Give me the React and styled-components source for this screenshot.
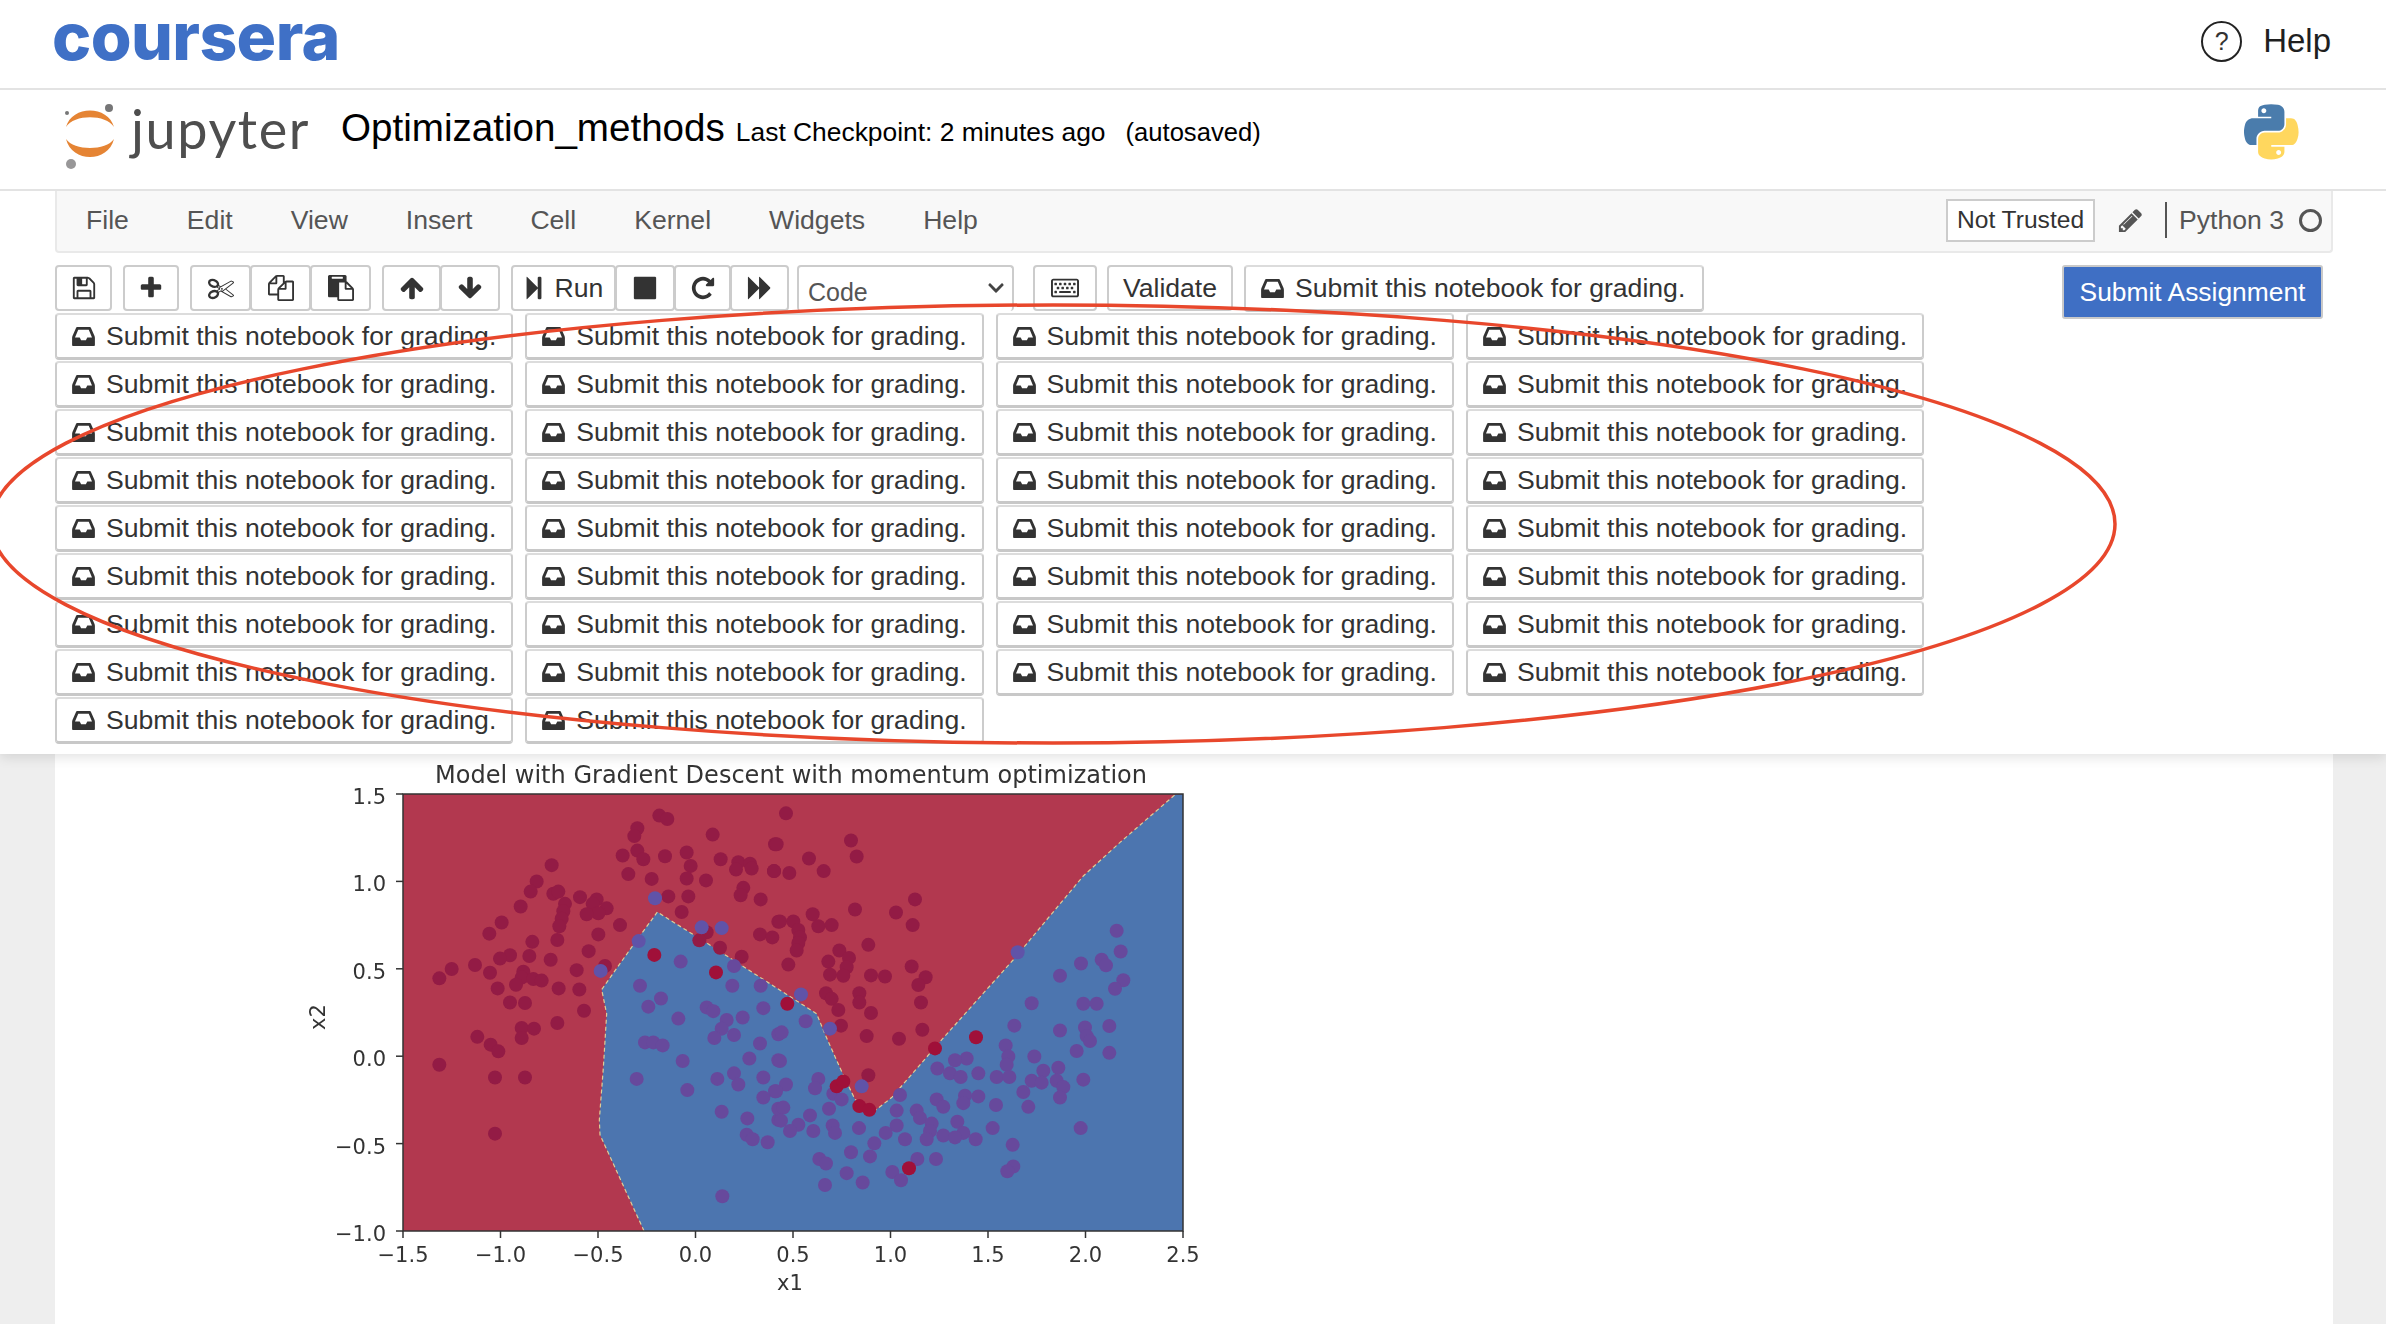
import React from 'react';
import styled, { createGlobalStyle } from 'styled-components';
import { FaRegKeyboard, FaChevronDown } from 'react-icons/fa';

const GlobalStyle = createGlobalStyle`
  html, body {
    margin: 0;
    padding: 0;
    background: #eeeeee;
    font-family: "Liberation Sans", Arial, sans-serif;
    overflow: hidden;
  }
`;

const Page = styled.div`
  position: relative;
  width: 2386px;
  height: 1324px;
  overflow: hidden;
`;

// everything fixed on top of the notebook
const TopArea = styled.div`
  position: relative;
  z-index: 2;
  height: 754px;
  background: #fff;
  box-shadow: 0 3px 12px rgba(0, 0, 0, 0.12);
`;

const CourseraBar = styled.div`
  height: 88px;
  box-sizing: content-box;
  padding: 0 55px 0 52px;
  display: flex;
  align-items: center;
  justify-content: space-between;
  border-bottom: 2px solid #e3e3e3;
`;

const Logo = styled.div`
  font-family: Inter, sans-serif;
  font-weight: 800;
  font-size: 66px;
  line-height: 70px;
  letter-spacing: -0.6px;
  color: #3f70c6;
  padding-bottom: 16px;
`;

const HelpLink = styled.div`
  display: flex;
  align-items: center;
  gap: 21px;
  font-size: 33px;
  color: #1f1f1f;
  padding-bottom: 6px;
`;

const HelpCircle = styled.div`
  width: 37px;
  height: 37px;
  border: 2px solid #222;
  border-radius: 50%;
  display: flex;
  align-items: center;
  justify-content: center;
  font-size: 25px;
  color: #333;
`;

const NotebookHeader = styled.div`
  height: 99px;
  padding-left: 60px;
  padding-right: 87px;
  display: flex;
  align-items: center;
  border-bottom: 2px solid #e3e3e3;
`;

const JupyterMark = styled.svg`
  width: 60px;
  height: 70px;
  flex: none;
  margin-top: -8px;
`;

const JupyterWord = styled.div`
  font-family: Lato, sans-serif;
  font-size: 54px;
  letter-spacing: 1.6px;
  color: #4e4e4e;
  margin-left: 11px;
  margin-top: -23px;
  width: 210px;
`;

const TitleGroup = styled.div`
  display: flex;
  align-items: baseline;
  color: #000;
  margin-top: -24px;
`;

const Title = styled.span`
  font-size: 38.6px;
  margin-right: 11px;
`;

const Checkpoint = styled.span`
  font-size: 26.4px;
  margin-right: 20px;
`;

const Autosaved = styled.span`
  font-size: 25.6px;
`;

const PythonLogo = styled.svg`
  width: 55px;
  height: 56px;
  margin-left: auto;
  margin-top: -15px;
  flex: none;
`;

const MenuBar = styled.div`
  margin: 0 53px 0 55px;
  height: 62px;
  box-sizing: border-box;
  padding: 0 9px 2px 0;
  display: flex;
  align-items: center;
  background: #f8f8f8;
  border: 2px solid #e9e9e9;
  border-top: none;
  border-radius: 0 0 4px 4px;
  font-size: 26.6px;
  color: #555;
`;

const MenuItem = styled.span`
  padding: 0 29px;
`;

const MenuRight = styled.div`
  margin-left: auto;
  display: flex;
  align-items: center;
`;

const TrustBadge = styled.div`
  width: 149px;
  height: 43px;
  box-sizing: border-box;
  display: flex;
  align-items: center;
  justify-content: center;
  background: #fff;
  border: 2px solid #ccc;
  color: #333;
  font-size: 24.6px;
`;

const KernelName = styled.span`
  margin-left: 21px;
  padding-left: 12px;
  border-left: 2px solid #555;
  height: 36px;
  line-height: 36px;
  font-size: 26.6px;
  color: #555;
`;

const KernelDot = styled.div`
  width: 23px;
  height: 23px;
  box-sizing: border-box;
  border: 3.5px solid #555;
  border-radius: 50%;
  margin-left: 15px;
`;

const Toolbar = styled.div`
  margin: 12px 63px 2px 55px;
  height: 46px;
  display: flex;
  gap: 11px;
`;

const BtnGroup = styled.div`
  display: flex;
`;

const Btn = styled.div`
  width: ${(p) => p.$w || 60}px;
  height: 46px;
  flex: none;
  box-sizing: border-box;
  display: flex;
  align-items: center;
  justify-content: center;
  gap: 8px;
  background: #fff;
  border: 2px solid #ccc;
  margin-left: -1px;
  border-radius: 4px;
  color: #333;
  font-size: 26.6px;
  &:first-child {
    margin-left: 0;
  }
`;

const RunBtn = styled(Btn)`
  padding-right: 3px;
`;

const KeyboardBtn = styled(Btn)`
  margin-left: 8px;
`;

const CellType = styled.div`
  width: 217px;
  height: 46px;
  flex: none;
  box-sizing: border-box;
  margin-left: -3px;
  padding: 6px 7px 0 9px;
  display: flex;
  align-items: center;
  justify-content: space-between;
  background: #fff;
  border: 2px solid #ccc;
  border-bottom-width: 0;
  border-radius: 4px;
  color: #555;
  font-size: 25px;
`;

const SubmitAssignment = styled.div`
  margin-left: auto;
  width: 261px;
  height: 54px;
  box-sizing: border-box;
  display: flex;
  align-items: center;
  justify-content: center;
  flex: none;
  background: #3f6fc4;
  border: 2px solid #c9c9c9;
  border-radius: 3px;
  color: #fff;
  font-size: 26.4px;
`;

const SubmitGrid = styled.div`
  margin-left: 55px;
  display: grid;
  grid-template-columns: repeat(4, 458.3px);
  grid-auto-rows: 47px;
  column-gap: 12px;
  row-gap: 1px;
`;

const SubmitBtn = styled(Btn)`
  width: ${(p) => p.$w || 458.3}px;
  height: 47px;
  justify-content: flex-start;
  padding-left: 15px;
  margin-left: 0;
  gap: 11px;
  border-top-color: #dcdcdc;
  border-bottom: 3px solid #c8c8c8;
`;

const Notebook = styled.div`
  margin: 0 53px 0 55px;
  height: 570px;
  background: #fff;
`;

const Chart = styled.svg`
  display: block;
  margin-left: 245px;
  width: 920px;
  height: 570px;
  filter: blur(0.5px);
  font-family: "DejaVu Sans", sans-serif;
`;

// the hand drawn red circle around the repeated buttons
const Scribble = styled.svg`
  position: absolute;
  left: 0;
  top: 0;
  z-index: 3;
  width: 2386px;
  height: 1324px;
  pointer-events: none;
`;

// toolbar glyphs, notebook uses font awesome 4
const glyphs = {
  save: 'M512 1536h768v-384h-768v384zm896 0h128v-896q0-14-10-38.5t-20-34.5l-281-281q-10-10-34-20t-39-10v416q0 40-28 68t-68 28h-576q-40 0-68-28t-28-68v-416h-128v1280h128v-416q0-40 28-68t68-28h832q40 0 68 28t28 68v416zm-384-928v-320q0-13-9.5-22.5t-22.5-9.5h-192q-13 0-22.5 9.5t-9.5 22.5v320q0 13 9.5 22.5t22.5 9.5h192q13 0 22.5-9.5t9.5-22.5zm640 32v928q0 40-28 68t-68 28h-1344q-40 0-68-28t-28-68v-1344q0-40 28-68t68-28h928q40 0 88 20t76 48l280 280q28 28 48 76t20 88z',
  plus: 'M1600 736v192q0 40-28 68t-68 28h-416v416q0 40-28 68t-68 28h-192q-40 0-68-28t-28-68v-416h-416q-40 0-68-28t-28-68v-192q0-40 28-68t68-28h416v-416q0-40 28-68t68-28h192q40 0 68 28t28 68v416h416q40 0 68 28t28 68z',
  cut: 'M960 896q26 0 45 19t19 45-19 45-45 19-45-19-19-45 19-45 45-19zm300 64l507 398q28 20 25 56-5 35-35 51l-128 64q-13 7-29 7-17 0-31-8l-690-387-110 66q-8 4-12 5 14 49 10 97-7 77-56 147.5t-132 123.5q-132 84-277 84-136 0-222-78-90-84-79-207 7-76 56-147t131-124q132-84 278-84 83 0 151 31 9-13 22-22l122-73-122-73q-13-9-22-22-68 31-151 31-146 0-278-84-82-53-131-124t-56-147q-5-59 15.5-113t63.5-93q85-79 222-79 145 0 277 84 83 52 132 123t56 148q4 48-10 97 4 1 12 5l110 66 690-387q14-8 31-8 16 0 29 7l128 64q30 16 35 51 3 36-25 56zm-681-260q46-42 21-108t-106-117q-92-59-192-59-74 0-113 36-46 42-21 108t106 117q92 59 192 59 74 0 113-36zm-85 745q81-51 106-117t-21-108q-39-36-113-36-100 0-192 59-81 51-106 117t21 108q39 36 113 36 100 0 192-59zm178-613l96 58v-11q0-36 33-56l14-8-79-47-26 26q-3 3-10 11t-12 12q-2 2-4 3.5t-3 2.5zm224 224l96 32 736-576-128-64-768 431v113l-160 96 9 8q2 2 7 6 4 4 11 12t11 12l26 26zm704 416l128-64-520-408-177 138q-2 3-13 7z',
  copy: 'M1696 384q40 0 68 28t28 68v1216q0 40-28 68t-68 28h-960q-40 0-68-28t-28-68v-288h-544q-40 0-68-28t-28-68v-672q0-40 20-88t48-76l408-408q28-28 76-48t88-20h416q40 0 68 28t28 68v328q68-40 128-40h416zm-544 213l-299 299h299v-299zm-640-384l-299 299h299v-299zm196 647l316-316v-416h-384v416q0 40-28 68t-68 28h-416v640h512v-256q0-40 20-88t48-76zm956 804v-1152h-384v416q0 40-28 68t-68 28h-416v640h896z',
  paste: 'M768 1664h896v-640h-416q-40 0-68-28t-28-68v-416h-384v1152zm256-1440v-64q0-13-9.5-22.5t-22.5-9.5h-704q-13 0-22.5 9.5t-9.5 22.5v64q0 13 9.5 22.5t22.5 9.5h704q13 0 22.5-9.5t9.5-22.5zm256 672h299l-299-299v299zm512 128v672q0 40-28 68t-68 28h-960q-40 0-68-28t-28-68v-160h-544q-40 0-68-28t-28-68v-1344q0-40 28-68t68-28h1088q40 0 68 28t28 68v328q21 13 36 28l408 408q28 28 48 76t20 88z',
  up: 'M1675 971q0 51-37 90l-75 75q-38 38-91 38-54 0-90-38l-294-293v704q0 52-37.5 84.5t-90.5 32.5h-128q-53 0-90.5-32.5t-37.5-84.5v-704l-294 293q-36 38-90 38t-90-38l-75-75q-38-38-38-90 0-53 38-91l651-651q35-37 90-37 54 0 91 37l651 651q37 39 37 91z',
  down: 'M1675 832q0 53-37 90l-651 652q-39 37-91 37-53 0-90-37l-651-652q-38-36-38-90 0-53 38-91l74-75q39-37 91-37 53 0 90 37l294 294v-704q0-52 38-90t90-38h128q52 0 90 38t38 90v704l294-294q37-37 90-37 52 0 91 37l75 75q37 39 37 91z',
  step: 'M429 1651q-19 19-32 13t-13-32v-1472q0-26 13-32t32 13l710 710q9 9 13 19v-678q0-26 19-45t45-19h128q26 0 45 19t19 45v1408q0 26-19 45t-45 19h-128q-26 0-45-19t-19-45v-678q-4 10-13 19z',
  stop: 'M1664 192v1408q0 26-19 45t-45 19h-1408q-26 0-45-19t-19-45v-1408q0-26 19-45t45-19h1408q26 0 45 19t19 45z',
  repeat: 'M1664 256v448q0 26-19 45t-45 19h-448q-42 0-59-40-17-39 14-69l138-138q-148-137-349-137-104 0-198.5 40.5t-163.5 109.5-109.5 163.5-40.5 198.5 40.5 198.5 109.5 163.5 163.5 109.5 198.5 40.5q119 0 225-52t179-147q7-10 23-12 15 0 25 9l137 138q9 8 9.5 20.5t-7.5 22.5q-109 132-264 204.5t-327 72.5q-156 0-298-61t-245-164-164-245-61-298 61-298 164-245 245-164 298-61q147 0 284.5 55.5t244.5 156.5l130-129q29-31 70-14 39 17 39 59z',
  forward: 'M109 1651q-19 19-32 13t-13-32v-1472q0-26 13-32t32 13l710 710q9 9 13 19v-710q0-26 13-32t32 13l710 710q19 19 19 45t-19 45l-710 710q-19 19-32 13t-13-32v-710q-4 10-13 19z',
  pencil: 'M491 1536l91-91-235-235-91 91v107h128v128h107zm523-928q0-22-22-22-10 0-17 7l-542 542q-7 7-7 17 0 22 22 22 10 0 17-7l542-542q7-7 7-17zm-54-192l416 416-832 832h-416v-416zm683 96q0 53-37 90l-166 166-416-416 166-165q36-38 90-38 53 0 91 38l235 234q37 39 37 91z',
};

const Glyph = ({ name, size = 26 }) => (
  <svg width={size} height={size} viewBox="0 0 1792 1792" fill="currentColor">
    <path d={glyphs[name]} />
  </svg>
);

const PencilHolder = styled.span`
  display: flex;
  margin-left: 22px;
  color: #555;
`;

const InboxIcon = () => (
  <svg width="23" height="19" viewBox="0 256 1536 1280" fill="currentColor">
    <path d="M1023 960h316q-1-3-2.5-8.5t-2.5-7.5l-212-496h-708l-212 496q-1 3-2.5 8.5t-2.5 7.5h316l95 192h320zm513 30v482q0 26-19 45t-45 19h-1408q-26 0-45-19t-19-45v-482q0-62 25-123l238-552q10-25 36.5-42t52.5-17h832q26 0 52.5 17t36.5 42l238 552q25 61 25 123z" />
  </svg>
);

// dot coordinates read off the plot, [x, y] in page px
const fromLeft = ([x, y]) => [280 + x / 3, 740 + y / 2.685];
const fromRight = ([x, y]) => [700 + x / 3, 740 + y / 2.685];

const redOnRed = [
  ...[[1138,203],[1162,212],[1072,237],[1063,258],[1298,254],[1485,280],[1028,310],[1072,297],[1090,320],[1155,312],[1220,302],[1232,338],[1322,320],[1375,328],[1368,348],[1410,332],[1415,345],[1482,352],[815,336],[1045,360],[1115,373],[1220,372],[1278,377],[770,380],[752,407],[820,413],[835,407],[1165,420],[1225,420],[1390,397],[1382,417],[1442,428],[900,422],[722,447],[855,440],[850,460],[845,480],[838,500],[950,428],[938,440],[980,452],[955,465],[920,468],[1205,462],[665,490],[628,520],[1020,497],[955,522],[832,537],[757,542],[1495,488],[1440,522],[1477,530],[1280,516],[1258,538],[1320,558],[1385,582],[926,567],[690,578],[660,587],[748,580],[812,590],[585,604],[515,615],[478,640],[630,625],[730,622],[890,618],[975,607],[725,638],[760,642],[785,646],[708,657],[653,667],[836,667],[898,670],[690,705],[735,706],[912,727],[832,760],[725,773],[762,775],[725,800],[592,797],[632,818],[655,836],[478,872],[645,906],[735,906],[645,1057]].map(fromLeft),
  ...[[258,197],[230,280],[453,270],[470,313],[327,318],[222,352],[268,357],[371,352],[645,428],[465,455],[588,463],[338,468],[638,497],[240,487],[280,487],[355,500],[395,497],[295,510],[300,530],[295,545],[290,565],[505,550],[418,565],[447,585],[385,595],[265,603],[635,608],[440,610],[390,630],[430,633],[513,632],[555,635],[677,637],[655,658],[378,680],[395,695],[478,680],[478,705],[663,705],[415,725],[513,733],[423,767],[667,778],[500,795],[597,802],[505,900]].map(fromRight),
];

const redOnBlue = [
  ...[[1123,577],[1308,624]].map(fromLeft),
  ...[[262,708],[828,798],[705,828],[410,930],[430,917],[478,983],[508,993],[627,1150]].map(fromRight),
];

const blueOnRed = [
  ...[[1125,425],[1265,503],[1325,505],[962,620],[1076,540]].map(fromLeft),
  ...[[303,683],[390,775],[485,930],[953,570]].map(fromRight),
];

const blueOnBlue = [
  ...[[1202,595],[1362,607],[1080,660],[1357,660],[1442,660],[1143,694],[1105,716],[1280,718],[1300,728],[1450,720],[1195,748],[1340,752],[1388,745],[1325,775],[1095,812],[1120,812],[1148,820],[1303,800],[1362,792],[1440,815],[1208,862],[1408,855],[1495,860],[1362,895],[1375,925],[1070,910],[1312,910],[1450,906],[1222,940],[1450,960],[1485,943],[1325,998],[1402,1016],[1400,1060],[1418,1072],[1463,1080],[1327,1225],[1495,790],[1495,1020],[1495,990]].map(fromLeft),
  ...[[1250,512],[1262,568],[1143,600],[1205,590],[1218,605],[1080,633],[1270,645],[1245,668],[995,707],[1150,708],[1190,708],[317,755],[245,785],[943,767],[1080,780],[1155,772],[1228,768],[1160,795],[1170,808],[1130,835],[1228,840],[917,820],[925,850],[1003,850],[800,855],[765,860],[920,872],[240,862],[712,882],[750,895],[782,905],[835,895],[890,905],[928,905],[1030,888],[1075,880],[995,915],[1025,920],[1070,915],[1090,932],[1150,912],[355,910],[345,935],[970,945],[1080,960],[258,925],[228,943],[400,950],[425,965],[600,953],[795,955],[835,957],[790,975],[710,965],[730,985],[888,980],[985,985],[387,990],[250,987],[590,995],[650,995],[660,1015],[330,1008],[243,1022],[695,1030],[772,1025],[590,1035],[295,1033],[270,1050],[340,1050],[398,1035],[405,1055],[477,1042],[557,1055],[690,1050],[790,1055],[878,1042],[1142,1042],[730,1062],[765,1067],[615,1072],[680,1072],[827,1072],[523,1083],[938,1087],[453,1107],[510,1118],[358,1125],[378,1137],[652,1125],[708,1125],[940,1145],[922,1158],[577,1160],[603,1182],[440,1163],[488,1188],[375,1195]].map(fromRight),
];

const boundary = [
  ...[[1092,1318],[960,1060],[958,1020],[970,880],[980,735],[965,670],[1060,550],[1132,462]].map(fromLeft),
  ...[[20,545],[350,735],[375,790],[425,890],[465,965],[525,995],[575,960],[720,810],[940,590],[1150,365],[1260,275],[1425,147]].map(fromRight),
];

const xTicks = [['−1.5', 403], ['−1.0', 500.5], ['−0.5', 598], ['0.0', 695.5], ['0.5', 793], ['1.0', 890.5], ['1.5', 988], ['2.0', 1085.5], ['2.5', 1183]];
const yTicks = [['1.5', 794], ['1.0', 881.4], ['0.5', 968.8], ['0.0', 1056.2], ['−0.5', 1143.6], ['−1.0', 1231]];

const Dots = ({ points, color }) => (
  <g fill={color}>
    {points.map(([x, y], i) => (
      <circle key={i} cx={x} cy={y} r="7" />
    ))}
  </g>
);

const DecisionPlot = () => {
  const line = boundary.map((p) => p.join(',')).join(' ');
  return (
    <Chart viewBox="300 754 920 570">
      <rect x="403" y="794" width="780" height="437" fill="#b2384f" />
      <polygon points={`${line} 1183,794 1183,1231`} fill="#4c75af" />
      <polyline points={line} fill="none" stroke="#f2eb9e" strokeOpacity="0.8" strokeWidth="1.2" strokeDasharray="4 3" />
      <Dots points={redOnRed} color="#931b45" />
      <Dots points={blueOnBlue} color="#67499c" />
      <Dots points={blueOnRed} color="#6053a8" />
      <Dots points={redOnBlue} color="#a01039" />
      <rect x="403" y="794" width="780" height="437" fill="none" stroke="#333" strokeWidth="1.5" />
      <text x="435" y="783" fontSize="25" fill="#333" textLength="712" lengthAdjust="spacingAndGlyphs">
        Model with Gradient Descent with momentum optimization
      </text>
      {xTicks.map(([label, x]) => (
        <g key={label}>
          <line x1={x} x2={x} y1="1231" y2="1238" stroke="#333" strokeWidth="1.5" />
          <text x={x} y="1262" fontSize="21" fill="#333" textAnchor="middle">{label}</text>
        </g>
      ))}
      {yTicks.map(([label, y]) => (
        <g key={label}>
          <line x1="396" x2="403" y1={y} y2={y} stroke="#333" strokeWidth="1.5" />
          <text x="386" y={y + 10} fontSize="21" fill="#333" textAnchor="end">{label}</text>
        </g>
      ))}
      <text x="790" y="1290" fontSize="21" fill="#333" textAnchor="middle">x1</text>
      <text x="325" y="1017" fontSize="21" fill="#333" textAnchor="middle" transform="rotate(-90 325 1017)">x2</text>
    </Chart>
  );
};

const JupyterIcon = () => (
  <JupyterMark viewBox="0 0 60 70">
    <path d="M6 26 C12 4 48 4 54 26 C46 13 14 13 6 26 Z" fill="#e58434" />
    <path d="M6 38 C12 62 48 62 54 38 C46 50 14 50 6 38 Z" fill="#e58434" />
    <circle cx="49" cy="7" r="4" fill="#767677" />
    <circle cx="7" cy="12" r="2" fill="#767677" />
    <circle cx="11" cy="63" r="5" fill="#989798" />
  </JupyterMark>
);

const PythonIcon = () => (
  <PythonLogo viewBox="0 0 112 113">
    <path fill="#4a7cac" d="M54.92 0C50.34.02 45.96.41 42.11 1.09 30.76 3.1 28.7 7.29 28.7 15.03v10.22h26.81v3.41H18.64C10.85 28.66 4.02 33.34 1.89 42.25c-2.46 10.21-2.57 16.59 0 27.25 1.9 7.94 6.46 13.59 14.25 13.59h9.22V70.84c0-8.85 7.66-16.65 16.75-16.65h26.78c7.46 0 13.41-6.14 13.41-13.63V15.03c0-7.27-6.13-12.72-13.41-13.94C64.28.33 59.5-.02 54.92 0zM40.42 8.22c2.77 0 5.03 2.3 5.03 5.12 0 2.82-2.26 5.1-5.03 5.1-2.78 0-5.03-2.28-5.03-5.1 0-2.82 2.25-5.12 5.03-5.12z" />
    <path fill="#ffd75e" d="M85.64 28.66v11.9c0 9.23-7.83 17-16.75 17H42.11c-7.34 0-13.41 6.28-13.41 13.63v25.53c0 7.27 6.32 11.54 13.41 13.63 8.49 2.5 16.63 2.95 26.78 0 6.75-1.96 13.41-5.89 13.41-13.63V86.5H55.51v-3.41h40.19c7.79 0 10.7-5.43 13.41-13.59 2.8-8.4 2.68-16.48 0-27.25-1.93-7.76-5.61-13.59-13.41-13.59H85.64zM70.57 93.31c2.78 0 5.03 2.28 5.03 5.1 0 2.82-2.25 5.12-5.03 5.12-2.77 0-5.03-2.3-5.03-5.12 0-2.82 2.26-5.1 5.03-5.1z" />
  </PythonLogo>
);

const menuNames = ['File', 'Edit', 'View', 'Insert', 'Cell', 'Kernel', 'Widgets', 'Help'];

const SubmitNotebook = ({ width }) => (
  <SubmitBtn $w={width}>
    <InboxIcon />
    <span>Submit this notebook for grading.</span>
  </SubmitBtn>
);

const App = () => (
  <Page>
    <GlobalStyle />
    <TopArea>
      <CourseraBar>
        <Logo>coursera</Logo>
        <HelpLink>
          <HelpCircle>?</HelpCircle>
          Help
        </HelpLink>
      </CourseraBar>

      <NotebookHeader>
        <JupyterIcon />
        <JupyterWord>jupyter</JupyterWord>
        <TitleGroup>
          <Title>Optimization_methods</Title>
          <Checkpoint>Last Checkpoint: 2 minutes ago</Checkpoint>
          <Autosaved>(autosaved)</Autosaved>
        </TitleGroup>
        <PythonIcon />
      </NotebookHeader>

      <MenuBar>
        {menuNames.map((name) => (
          <MenuItem key={name}>{name}</MenuItem>
        ))}
        <MenuRight>
          <TrustBadge>Not Trusted</TrustBadge>
          <PencilHolder><Glyph name="pencil" size={27} /></PencilHolder>
          <KernelName>Python 3</KernelName>
          <KernelDot />
        </MenuRight>
      </MenuBar>

      <Toolbar>
        <BtnGroup><Btn $w={57}><Glyph name="save" /></Btn></BtnGroup>
        <BtnGroup><Btn $w={56}><Glyph name="plus" /></Btn></BtnGroup>
        <BtnGroup>
          <Btn $w={61}><Glyph name="cut" /></Btn>
          <Btn $w={61}><Glyph name="copy" /></Btn>
          <Btn $w={61}><Glyph name="paste" /></Btn>
        </BtnGroup>
        <BtnGroup>
          <Btn $w={59}><Glyph name="up" /></Btn>
          <Btn $w={60}><Glyph name="down" /></Btn>
        </BtnGroup>
        <BtnGroup>
          <RunBtn $w={105}><Glyph name="step" />Run</RunBtn>
          <Btn $w={60}><Glyph name="stop" /></Btn>
          <Btn $w={57}><Glyph name="repeat" /></Btn>
          <Btn $w={59}><Glyph name="forward" /></Btn>
        </BtnGroup>
        <CellType>
          Code
          <FaChevronDown size={18} color="#444" style={{ marginTop: -8 }} />
        </CellType>
        <KeyboardBtn $w={64}><FaRegKeyboard size={28} /></KeyboardBtn>
        <Btn $w={126}>Validate</Btn>
        <SubmitNotebook width={460} />
        <SubmitAssignment>Submit Assignment</SubmitAssignment>
      </Toolbar>

      <SubmitGrid>
        {Array.from({ length: 34 }).map((_, i) => (
          <SubmitNotebook key={i} />
        ))}
      </SubmitGrid>
    </TopArea>

    <Notebook>
      <DecisionPlot />
    </Notebook>

    <Scribble viewBox="0 0 2386 1324">
      <ellipse cx="1053" cy="524" rx="1062" ry="219" fill="none" stroke="#e8472c" strokeWidth="3.5" />
    </Scribble>
  </Page>
);

export default App;
